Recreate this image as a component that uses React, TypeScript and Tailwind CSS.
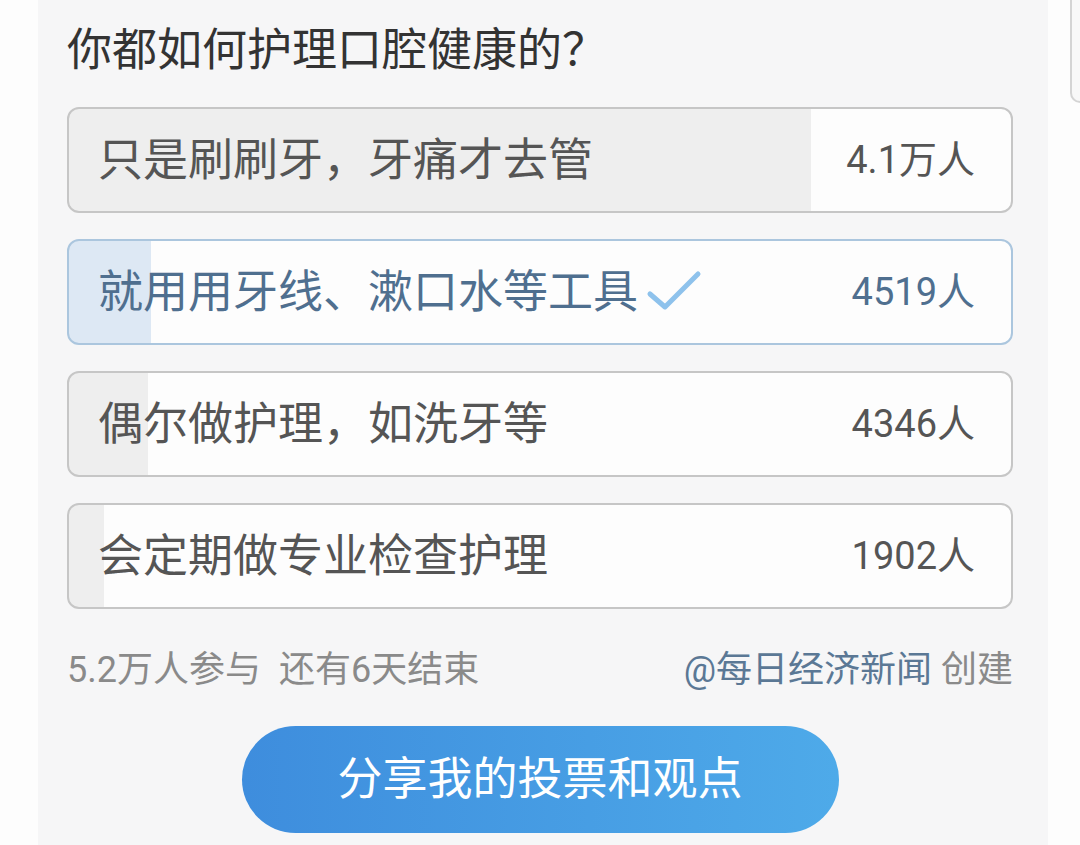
import React from "react";

interface PollOption {
  label: string;
  count: string;
  votes: number;
  selected?: boolean;
}

const TOTAL = 52000;

const options: PollOption[] = [
  { label: "只是刷刷牙，牙痛才去管", count: "4.1万人", votes: 41000 },
  { label: "就用用牙线、漱口水等工具", count: "4519人", votes: 4519, selected: true },
  { label: "偶尔做护理，如洗牙等", count: "4346人", votes: 4346 },
  { label: "会定期做专业检查护理", count: "1902人", votes: 1902 },
];

const font = "font-['Roboto','Noto_Sans_CJK_SC',sans-serif]";

// 已投选项后面的小对勾
const CheckMark = () => (
  <svg width="56" height="44" viewBox="0 0 56 44" className="ml-[8px] shrink-0">
    <path
      d="M4 24 L19 37 L52 4"
      fill="none"
      stroke="#8ec2ec"
      strokeWidth="5"
      strokeLinecap="round"
      strokeLinejoin="round"
    />
  </svg>
);

const OptionRow = ({ option }: { option: PollOption }) => {
  // 按票数占比画底色进度
  const pct = ((option.votes / TOTAL) * 100).toFixed(1);
  const fill = option.selected ? "#dde8f4" : "#eeeeee";
  return (
    <div
      className={`flex items-center justify-between h-[106px] rounded-[12px] border-2 pl-[29px] pr-[36px] ${
        option.selected ? "border-[#abc6de]" : "border-[#c6c6c6]"
      }`}
      style={{
        backgroundImage: `linear-gradient(to right, ${fill} ${pct}%, #fdfdfd ${pct}%)`,
      }}
    >
      <div className="flex items-center">
        <span
          className={`text-[45px] leading-none ${
            option.selected ? "text-[#4f6f8f]" : "text-[#555555]"
          }`}
        >
          {option.label}
        </span>
        {option.selected && <CheckMark />}
      </div>
      <span
        className={`text-[38px] leading-none ${
          option.selected ? "text-[#4f6f8f]" : "text-[#555555]"
        }`}
      >
        {option.count}
      </span>
    </div>
  );
};

export default function App() {
  return (
    <div className={`flex w-[1080px] h-[845px] bg-[#fdfdfd] overflow-hidden ${font}`}>
      <div className="w-[38px] shrink-0" />

      <div className="w-[1010px] shrink-0 bg-[#f6f6f7] pl-[29px] pr-[35px] pt-[21px]">
        <h1 className="font-['Noto_Sans_CJK_SC',sans-serif] text-[45px] leading-[52px] text-[#333333] font-normal">
          你都如何护理口腔健康的？
        </h1>

        <div className="mt-[34px] flex flex-col gap-[26px]">
          {options.map((o) => (
            <OptionRow key={o.label} option={o} />
          ))}
        </div>

        <div className="mt-[38px] flex items-center justify-between text-[36px] leading-[46px]">
          <div className="text-[#8a8a8a]">
            5.2万人参与<span className="ml-[18px]">还有6天结束</span>
          </div>
          <div className="text-[#8a8a8a]">
            <span className="text-[#5b7895]">@每日经济新闻</span> 创建
          </div>
        </div>

        <div className="mt-[33px] flex justify-center">
          <button className="w-[597px] h-[107px] rounded-full bg-gradient-to-r from-[#3e8ddd] to-[#4eaae9] text-white text-[45px] leading-none">
            分享我的投票和观点
          </button>
        </div>
      </div>

      {/* 右侧滚动条残影 */}
      <div className="ml-[22px] w-[12px] h-[103px] border-l-2 border-b-2 border-[#d4d4d4] rounded-bl-[10px] bg-[#f8f8f8]" />
    </div>
  );
}
